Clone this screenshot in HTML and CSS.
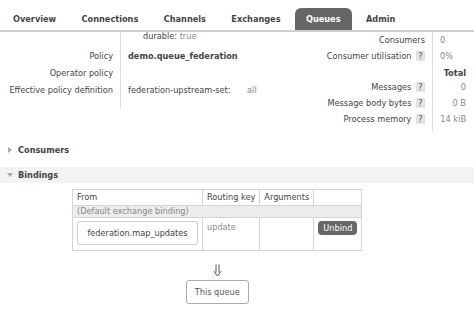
FILE: index.html
```html
<!DOCTYPE html>
<html lang="en">
<head>
    <meta charset="UTF-8">
    <title>Queue details</title>
    <link rel="stylesheet" href="styles.css">
</head>
<body>
    <!-- Main navigation -->
    <ul class="tabs">
        <li><a href="#">Overview</a></li>
        <li><a href="#">Connections</a></li>
        <li><a href="#">Channels</a></li>
        <li><a href="#">Exchanges</a></li>
        <li><a href="#" class="selected">Queues</a></li>
        <li><a href="#">Admin</a></li>
    </ul>

    <div class="details">
        <table class="facts info">
            <tr class="features">
                <th></th>
                <td><span class="key">durable:</span> <span class="dim">true</span></td>
            </tr>
            <tr>
                <th>Policy</th>
                <td><b>demo.queue_federation</b></td>
            </tr>
            <tr>
                <th>Operator policy</th>
                <td></td>
            </tr>
            <tr class="last">
                <th>Effective policy definition</th>
                <td><span class="key">federation-upstream-set:</span> <span class="dim pad">all</span></td>
            </tr>
        </table>

        <table class="facts stats">
            <tr>
                <th>Consumers</th>
                <td class="dim">0</td>
            </tr>
            <tr>
                <th>Consumer utilisation <span class="help">?</span></th>
                <td class="dim">0%</td>
            </tr>
            <tr class="total">
                <th></th>
                <td class="num"><b>Total</b></td>
            </tr>
            <tr>
                <th>Messages <span class="help">?</span></th>
                <td class="num dim">0</td>
            </tr>
            <tr>
                <th>Message body bytes <span class="help">?</span></th>
                <td class="num dim">0 B</td>
            </tr>
            <tr class="last">
                <th>Process memory <span class="help">?</span></th>
                <td class="num dim">14 kiB</td>
            </tr>
        </table>
    </div>

    <div class="section closed">
        <h2><span class="arrow right"></span>Consumers</h2>
    </div>

    <div class="section open">
        <h2><span class="arrow down"></span>Bindings</h2>
        <div class="bindings">
            <table class="list">
                <tr>
                    <th class="c-from">From</th>
                    <th class="c-key">Routing key</th>
                    <th class="c-args">Arguments</th>
                    <th class="c-act"></th>
                </tr>
                <tr class="default">
                    <td colspan="4">(Default exchange binding)</td>
                </tr>
                <tr>
                    <td><span class="handle">federation.map_updates</span></td>
                    <td class="dim">update</td>
                    <td></td>
                    <td><button class="unbind">Unbind</button></td>
                </tr>
            </table>
            <!-- double down arrow -->
            <svg class="flow" width="9" height="13" viewBox="0 0 9 13">
                <path d="M3 0.5V8.5M6 0.5V8.5" stroke="#555" stroke-width="1" fill="none"/>
                <path d="M0.8 7.2L4.5 12L8.2 7.2" stroke="#555" stroke-width="1" fill="none"/>
            </svg>
            <span class="handle queue">This queue</span>
        </div>
    </div>
</body>
</html>
```

FILE: styles.css
```css
body {
    margin: 0;
    font-family: "DejaVu Sans", Verdana, sans-serif;
    font-size: 8.2px;
    color: #444;
    background: #fff;
    overflow: hidden;
}
/* Navigation tabs */
.tabs {
    display: flex;
    list-style: none;
    margin: 0;
    padding: 8px 0 0 2px;
    border-bottom: 2px solid #cfcfcf;
}
.tabs a {
    display: block;
    height: 22px;
    line-height: 22px;
    padding: 0 11px;
    margin-right: 3.4px;
    font-weight: bold;
    color: #444;
    text-decoration: none;
    border-radius: 6px 6px 0 0;
}
.tabs a.selected {
    background: #666;
    color: #fff;
}

/* Top detail tables */
.details {
    display: flex;
    justify-content: space-between;
    align-items: flex-start;
}
.facts {
    border-collapse: collapse;
}
.facts th, .facts td {
    padding: 2px 7px;
    line-height: 12px;
    white-space: nowrap;
    vertical-align: top;
}
.facts th {
    width: 106px;
    font-weight: normal;
    text-align: right;
}
.facts td {
    border-left: 1px solid #ddd;
    min-width: 120px;
}
.facts .features th, .facts .features td {
    padding: 0 7px 8px;
    line-height: 8px;
}
.facts .features td {
    padding-left: 22px;
}
.facts .last th, .facts .last td {
    padding-bottom: 6px;
}
.info tr:nth-child(3) th {
    padding-top: 3px;
}
.info .last th, .info .last td {
    padding-top: 3px;
    padding-bottom: 12px;
}
.stats th {
    width: auto;
}
.stats td {
    min-width: 0;
    width: 26px;
    padding-right: 8px;
}
.stats .total td {
    padding-top: 3px;
    padding-bottom: 0;
}
.num {
    text-align: right;
}
.dim {
    color: #888;
}
.pad {
    margin-left: 14px;
}
.help {
    display: inline-block;
    width: 9px;
    height: 10px;
    line-height: 10px;
    margin-left: 2px;
    background: #e2e2e2;
    text-align: center;
    color: #555;
}

/* Collapsible sections */
.section h2 {
    margin: 0;
    padding: 0 0 0 7px;
    font-size: 8.2px;
    line-height: 16px;
    color: #444;
}
.section.closed h2 {
    margin-top: 11px;
}
.section.open h2 {
    margin-top: 9px;
    background: #f3f3f3;
}
.arrow {
    display: inline-block;
    width: 0;
    height: 0;
    margin-right: 6px;
    vertical-align: 0;
}
.arrow.right {
    border-top: 3px solid transparent;
    border-bottom: 3px solid transparent;
    border-left: 4px solid #aaa;
    margin-left: 1px;
}
.arrow.down {
    border-left: 3px solid transparent;
    border-right: 3px solid transparent;
    border-top: 4px solid #aaa;
    vertical-align: 1px;
    margin-right: 5px;
}

/* Bindings */
.bindings {
    display: inline-block;
    margin: 6px 0 0 72px;
    text-align: center;
}
.list {
    border-collapse: collapse;
    text-align: left;
}
.list th, .list td {
    border: 1px solid #d4d4d4;
    padding: 0 4px;
    line-height: 15px;
    vertical-align: top;
    white-space: nowrap;
}
.list th {
    font-weight: normal;
    color: #444;
}
.c-from { width: 121px; }
.c-key { width: 47px; }
.c-args { width: 45px; }
.c-act { width: 39px; }
.list .default td {
    background: #ececec;
    color: #888;
    line-height: 11px;
}
.list tr:last-child td {
    height: 30px;
    padding-top: 2px;
}
.handle {
    display: block;
    border: 1px solid #ccc;
    border-radius: 3px;
    padding: 5px 6px;
    line-height: 12px;
    text-align: center;
    color: #444;
}
.list tr:last-child td .handle {
    margin-top: 1px;
}
.unbind {
    margin-top: 1px;
    padding: 1px 5px;
    border: 0;
    border-radius: 4px;
    background: #666;
    color: #fff;
    font-family: inherit;
    font-size: inherit;
    line-height: 12px;
}
.flow {
    display: block;
    margin: 13px auto 3px;
}
.handle.queue {
    display: inline-block;
    border-color: #aaa;
    padding: 5px 8px;
    color: #555;
}
```
